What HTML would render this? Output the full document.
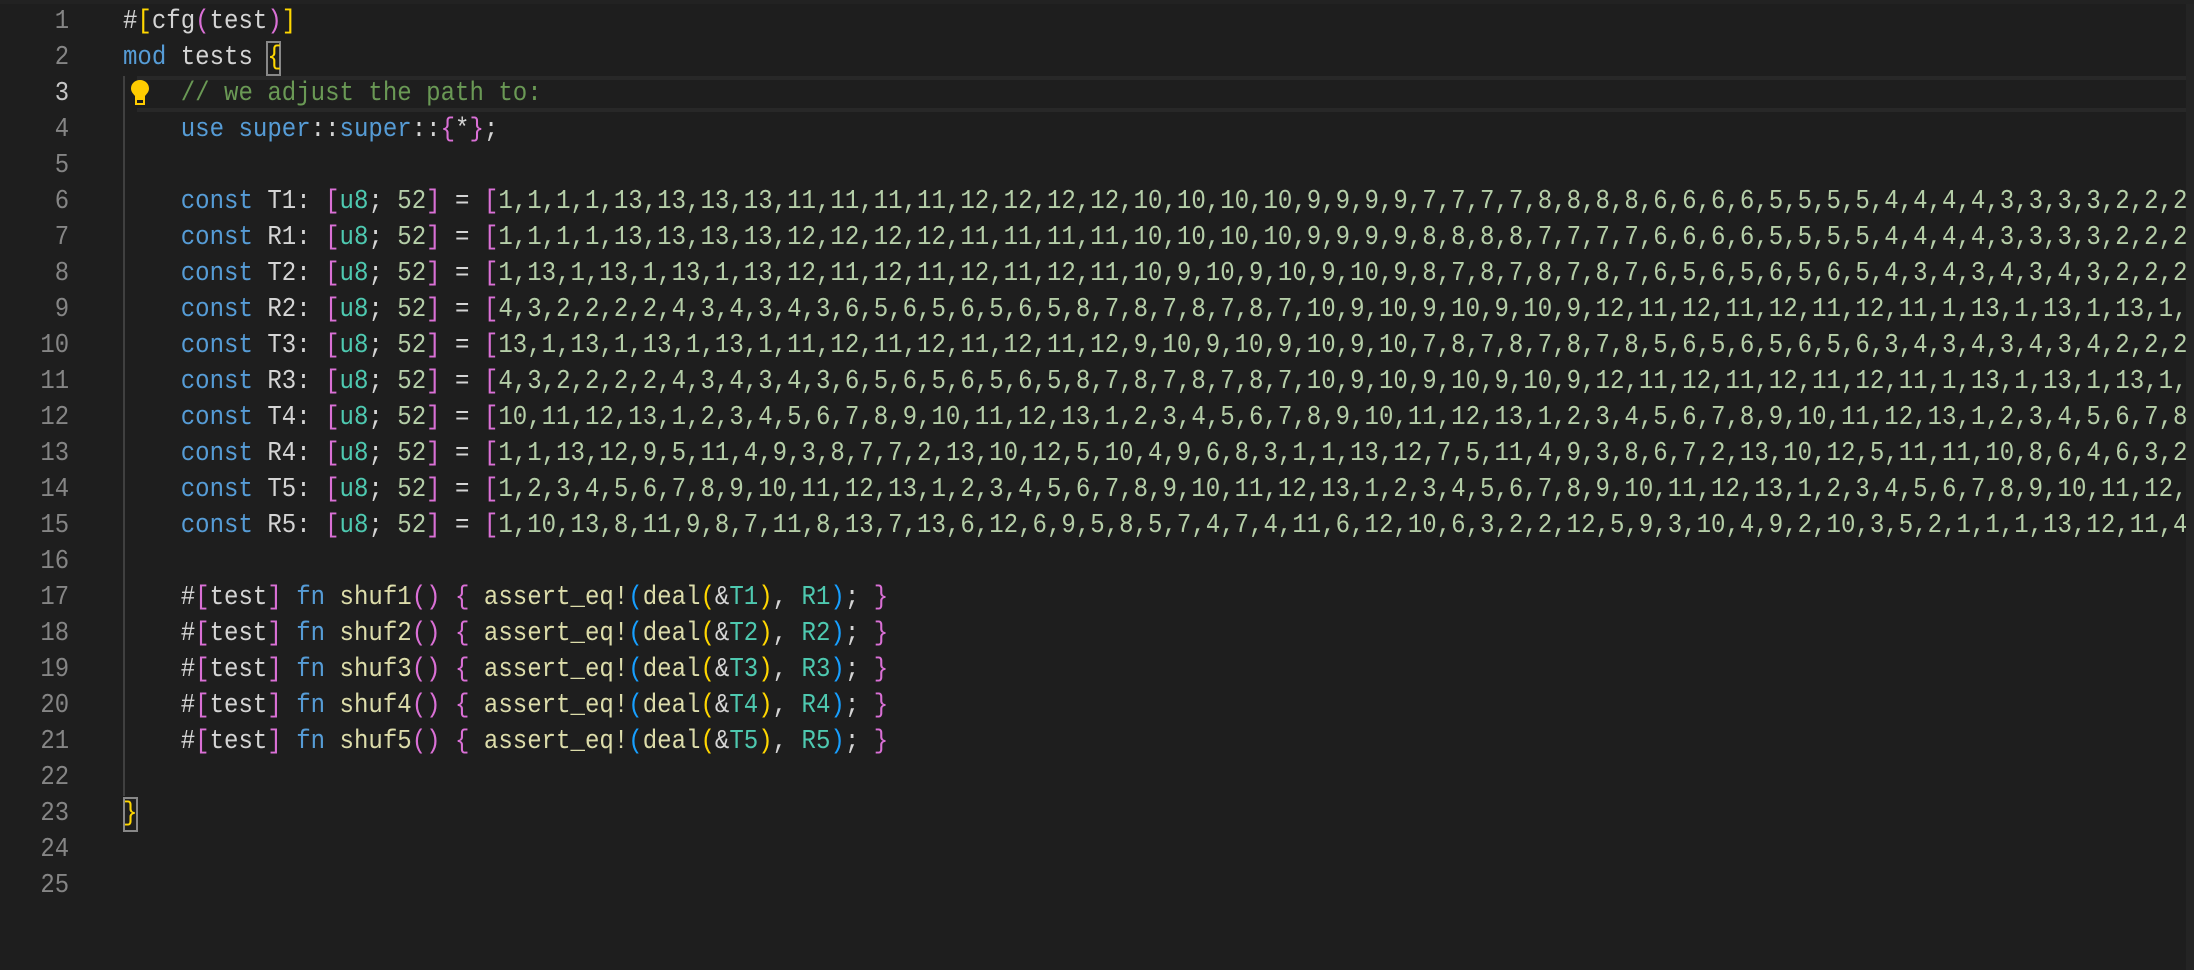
<!DOCTYPE html>
<html><head><meta charset="utf-8"><style>
html,body{margin:0;padding:0;background:#1e1e1e;width:2194px;height:970px;overflow:hidden}
#top{position:absolute;left:0;top:0;width:2194px;height:4px;background:#222}
#rs{position:absolute;left:2186px;top:4px;width:8px;height:966px;background:#242424}
.ln{position:absolute;left:0;width:78px;text-align:right;color:#858585;font:27px/36px "Liberation Mono",monospace;transform:scaleX(0.886);transform-origin:0 0}
.clip{position:absolute;left:123px;top:4px;width:2063px;height:930px;overflow:hidden}
.code{position:absolute;left:0;top:0;width:2400px;white-space:pre;color:#d4d4d4;font:27px/36px "Liberation Mono",monospace;transform:scaleX(0.891);transform-origin:0 0}
.k{color:#569cd6}.c{color:#6a9955}.n{color:#b5cea8}.t{color:#4ec9b0}.f{color:#dcdcaa}
.y{color:#ffd700}.p{color:#da70d6}.b{color:#179fff}
#cur{position:absolute;left:137px;top:76px;width:2049px;height:28px;border-top:4px solid #282828;border-bottom:4px solid #282828}
#guide{position:absolute;left:123px;top:76px;width:2px;height:720px;background:#404040}
.box{position:absolute;border:2px solid #888;box-sizing:border-box}
</style></head><body>
<div id="top"></div>
<div id="cur"></div>
<div id="guide"></div>
<div class="box" style="left:266px;top:41px;width:15px;height:35px"></div>
<div class="box" style="left:123px;top:797px;width:15px;height:35px"></div>
<svg style="position:absolute;left:129px;top:79px" width="22" height="26" viewBox="0 0 22 26"><path d="M11 1C5.5 1 2 5 2 9.5c0 3.5 2.5 5.5 4 7.5v3h10v-3c1.5-2 4-4 4-7.5C20 5 16.5 1 11 1z" fill="#ffcc00"/><rect x="7" y="20" width="8" height="5" fill="none" stroke="#ffcc00" stroke-width="2"/></svg>
<div id="rs"></div>
<div class="ln" style="top:4px">1<br>2<br><span style="color:#c6c6c6">3</span><br>4<br>5<br>6<br>7<br>8<br>9<br>10<br>11<br>12<br>13<br>14<br>15<br>16<br>17<br>18<br>19<br>20<br>21<br>22<br>23<br>24<br>25</div>
<div class="clip"><div class="code">#<span class="y">[</span>cfg<span class="p">(</span>test<span class="p">)</span><span class="y">]</span>
<span class="k">mod</span> tests <span class="y">{</span>
    <span class="c">// we adjust the path to:</span>
    <span class="k">use</span> <span class="k">super</span>::<span class="k">super</span>::<span class="p">{</span>*<span class="p">}</span>;

    <span class="k">const</span> T1: <span class="p">[</span><span class="t">u8</span>; <span class="n">52</span><span class="p">]</span> = <span class="p">[</span><span class="n">1,1,1,1,13,13,13,13,11,11,11,11,12,12,12,12,10,10,10,10,9,9,9,9,7,7,7,7,8,8,8,8,6,6,6,6,5,5,5,5,4,4,4,4,3,3,3,3,2,2,2,2</span>
    <span class="k">const</span> R1: <span class="p">[</span><span class="t">u8</span>; <span class="n">52</span><span class="p">]</span> = <span class="p">[</span><span class="n">1,1,1,1,13,13,13,13,12,12,12,12,11,11,11,11,10,10,10,10,9,9,9,9,8,8,8,8,7,7,7,7,6,6,6,6,5,5,5,5,4,4,4,4,3,3,3,3,2,2,2,2</span>
    <span class="k">const</span> T2: <span class="p">[</span><span class="t">u8</span>; <span class="n">52</span><span class="p">]</span> = <span class="p">[</span><span class="n">1,13,1,13,1,13,1,13,12,11,12,11,12,11,12,11,10,9,10,9,10,9,10,9,8,7,8,7,8,7,8,7,6,5,6,5,6,5,6,5,4,3,4,3,4,3,4,3,2,2,2,2</span>
    <span class="k">const</span> R2: <span class="p">[</span><span class="t">u8</span>; <span class="n">52</span><span class="p">]</span> = <span class="p">[</span><span class="n">4,3,2,2,2,2,4,3,4,3,4,3,6,5,6,5,6,5,6,5,8,7,8,7,8,7,8,7,10,9,10,9,10,9,10,9,12,11,12,11,12,11,12,11,1,13,1,13,1,13,1,13</span>
    <span class="k">const</span> T3: <span class="p">[</span><span class="t">u8</span>; <span class="n">52</span><span class="p">]</span> = <span class="p">[</span><span class="n">13,1,13,1,13,1,13,1,11,12,11,12,11,12,11,12,9,10,9,10,9,10,9,10,7,8,7,8,7,8,7,8,5,6,5,6,5,6,5,6,3,4,3,4,3,4,3,4,2,2,2,2</span>
    <span class="k">const</span> R3: <span class="p">[</span><span class="t">u8</span>; <span class="n">52</span><span class="p">]</span> = <span class="p">[</span><span class="n">4,3,2,2,2,2,4,3,4,3,4,3,6,5,6,5,6,5,6,5,8,7,8,7,8,7,8,7,10,9,10,9,10,9,10,9,12,11,12,11,12,11,12,11,1,13,1,13,1,13,1,13</span>
    <span class="k">const</span> T4: <span class="p">[</span><span class="t">u8</span>; <span class="n">52</span><span class="p">]</span> = <span class="p">[</span><span class="n">10,11,12,13,1,2,3,4,5,6,7,8,9,10,11,12,13,1,2,3,4,5,6,7,8,9,10,11,12,13,1,2,3,4,5,6,7,8,9,10,11,12,13,1,2,3,4,5,6,7,8,9</span>
    <span class="k">const</span> R4: <span class="p">[</span><span class="t">u8</span>; <span class="n">52</span><span class="p">]</span> = <span class="p">[</span><span class="n">1,1,13,12,9,5,11,4,9,3,8,7,7,2,13,10,12,5,10,4,9,6,8,3,1,1,13,12,7,5,11,4,9,3,8,6,7,2,13,10,12,5,11,11,10,8,6,4,6,3,2,2</span>
    <span class="k">const</span> T5: <span class="p">[</span><span class="t">u8</span>; <span class="n">52</span><span class="p">]</span> = <span class="p">[</span><span class="n">1,2,3,4,5,6,7,8,9,10,11,12,13,1,2,3,4,5,6,7,8,9,10,11,12,13,1,2,3,4,5,6,7,8,9,10,11,12,13,1,2,3,4,5,6,7,8,9,10,11,12,13</span>
    <span class="k">const</span> R5: <span class="p">[</span><span class="t">u8</span>; <span class="n">52</span><span class="p">]</span> = <span class="p">[</span><span class="n">1,10,13,8,11,9,8,7,11,8,13,7,13,6,12,6,9,5,8,5,7,4,7,4,11,6,12,10,6,3,2,2,12,5,9,3,10,4,9,2,10,3,5,2,1,1,1,13,12,11,4,3</span>

    #<span class="p">[</span>test<span class="p">]</span> <span class="k">fn</span> <span class="f">shuf1</span><span class="p">()</span> <span class="p">{</span> <span class="f">assert_eq!</span><span class="b">(</span><span class="f">deal</span><span class="y">(</span>&amp;<span class="t">T1</span><span class="y">)</span>, <span class="t">R1</span><span class="b">)</span>; <span class="p">}</span>
    #<span class="p">[</span>test<span class="p">]</span> <span class="k">fn</span> <span class="f">shuf2</span><span class="p">()</span> <span class="p">{</span> <span class="f">assert_eq!</span><span class="b">(</span><span class="f">deal</span><span class="y">(</span>&amp;<span class="t">T2</span><span class="y">)</span>, <span class="t">R2</span><span class="b">)</span>; <span class="p">}</span>
    #<span class="p">[</span>test<span class="p">]</span> <span class="k">fn</span> <span class="f">shuf3</span><span class="p">()</span> <span class="p">{</span> <span class="f">assert_eq!</span><span class="b">(</span><span class="f">deal</span><span class="y">(</span>&amp;<span class="t">T3</span><span class="y">)</span>, <span class="t">R3</span><span class="b">)</span>; <span class="p">}</span>
    #<span class="p">[</span>test<span class="p">]</span> <span class="k">fn</span> <span class="f">shuf4</span><span class="p">()</span> <span class="p">{</span> <span class="f">assert_eq!</span><span class="b">(</span><span class="f">deal</span><span class="y">(</span>&amp;<span class="t">T4</span><span class="y">)</span>, <span class="t">R4</span><span class="b">)</span>; <span class="p">}</span>
    #<span class="p">[</span>test<span class="p">]</span> <span class="k">fn</span> <span class="f">shuf5</span><span class="p">()</span> <span class="p">{</span> <span class="f">assert_eq!</span><span class="b">(</span><span class="f">deal</span><span class="y">(</span>&amp;<span class="t">T5</span><span class="y">)</span>, <span class="t">R5</span><span class="b">)</span>; <span class="p">}</span>

<span class="y">}</span>
</div></div>
</body></html>
